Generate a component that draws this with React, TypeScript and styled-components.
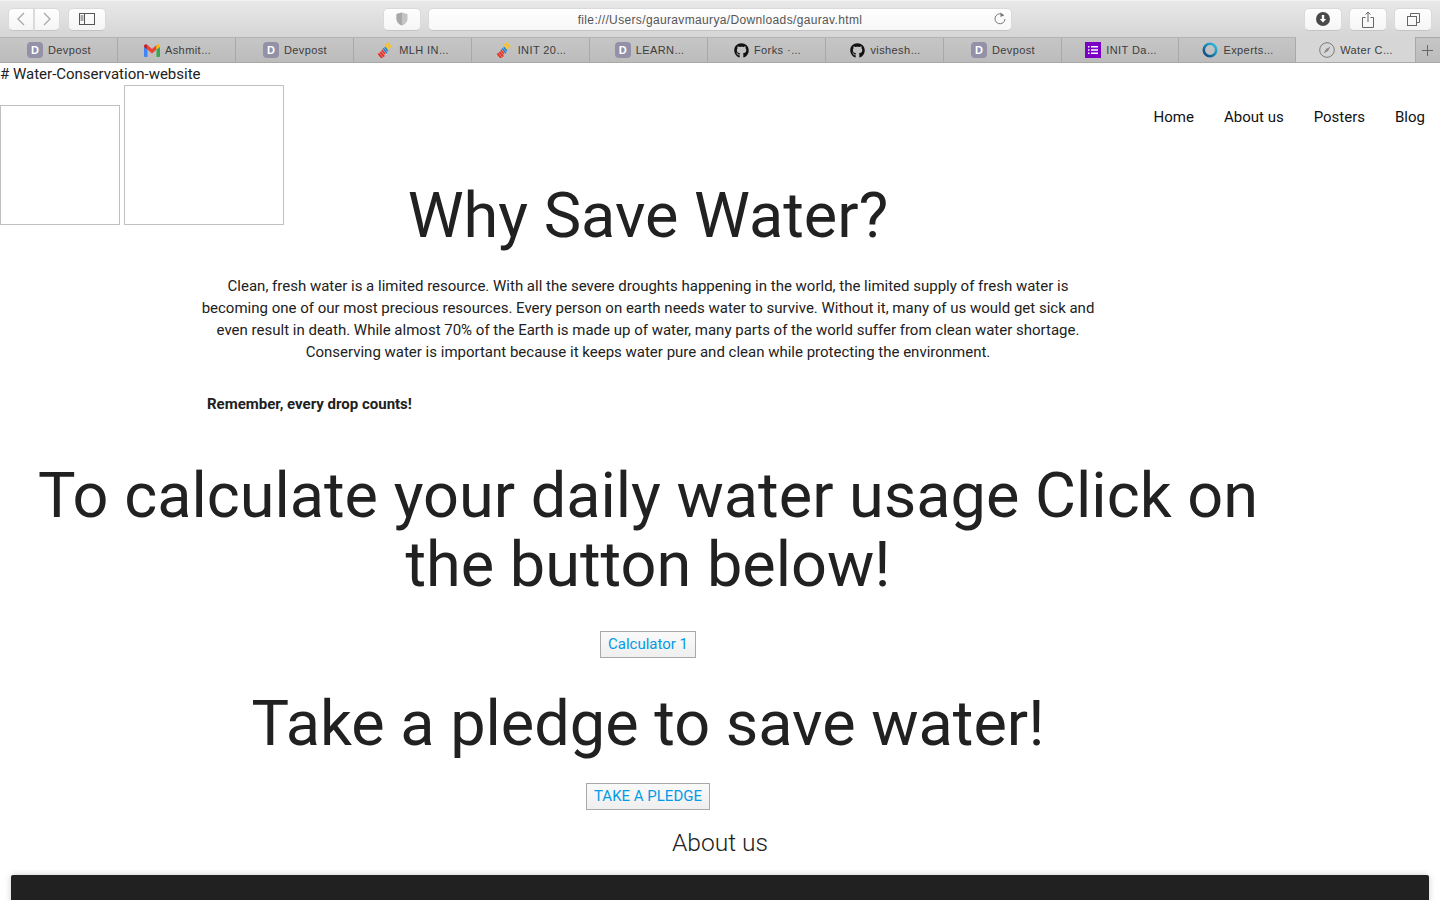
// Screenshot of a Safari window showing the water conservation page
import styled, { createGlobalStyle } from "styled-components";
import { FaGithub } from "react-icons/fa";

const GlobalStyle = createGlobalStyle`
  html, body {
    margin: 0;
    padding: 0;
    height: 900px;
    overflow: hidden;
    background: #fff;
  }
  * {
    box-sizing: border-box;
  }
`;

const Window = styled.div`
  width: 1440px;
  height: 900px;
  overflow: hidden;
  display: flex;
  flex-direction: column;
`;

// Browser toolbar
const Toolbar = styled.div`
  height: 38px;
  flex: none;
  display: flex;
  align-items: center;
  padding: 0 8px 0 8px;
  background: linear-gradient(#e9e9e9, #d5d5d5);
  border-top: 1px solid #f2f2f2;
  border-bottom: 1px solid #b3b3b3;
`;

const ToolButton = styled.div<{ $w: number; $left?: number; $radius?: string }>`
  width: ${(p) => p.$w}px;
  height: 23px;
  margin-left: ${(p) => p.$left ?? 0}px;
  flex: none;
  display: flex;
  align-items: center;
  justify-content: center;
  background: linear-gradient(#fefefe, #f5f5f5);
  border: 1px solid #dadada;
  border-bottom-color: #c4c4c4;
  border-radius: ${(p) => p.$radius ?? "5px"};
`;

const UrlBar = styled.div`
  position: relative;
  width: 584px;
  height: 23px;
  margin-left: 7px;
  padding-top: 1px;
  flex: none;
  display: flex;
  align-items: center;
  justify-content: center;
  background: linear-gradient(#fefefe, #f7f7f7);
  border: 1px solid #dadada;
  border-bottom-color: #c4c4c4;
  border-radius: 5px;
  font-family: "Liberation Sans", Arial, sans-serif;
  font-size: 12px;
  letter-spacing: 0.35px;
  color: #555;
`;

const Reload = styled.svg`
  position: absolute;
  right: 4px;
  top: 3px;
`;

// Tab strip
const TabStrip = styled.div`
  height: 25px;
  flex: none;
  display: flex;
  background: linear-gradient(#c6c6c6, #bcbcbc);
  border-bottom: 1px solid #a9a9a9;
`;

const Tab = styled.div<{ $w: number; $active?: boolean }>`
  width: ${(p) => p.$w}px;
  flex: none;
  display: flex;
  align-items: center;
  justify-content: center;
  gap: 5px;
  padding-left: 1px;
  border-right: 1px solid ${(p) => (p.$active ? "transparent" : "#a9a9a9")};
  margin-top: ${(p) => (p.$active ? "-1px" : "0")};
  background: ${(p) => (p.$active ? "#d6d6d6" : "transparent")};
  font-family: "Liberation Sans", Arial, sans-serif;
  font-size: 11px;
  letter-spacing: 0.4px;
  color: #3c3c3c;
`;

// Safari's truncation dots sit tighter than the font's own ellipsis
const Dots = styled.span`
  font-size: 10px;
  letter-spacing: -1px;
`;

const PlusTab = styled.div`
  flex: 1;
  display: flex;
  align-items: center;
  justify-content: center;
  padding-right: 1px;
  border-left: 1px solid #a9a9a9;
  margin-top: -1px;
  border-top: 1px solid #a9a9a9;
`;

const DevpostIcon = styled.span`
  width: 16px;
  height: 16px;
  border-radius: 4px;
  background: #9291a8;
  color: #fff;
  display: flex;
  align-items: center;
  justify-content: center;
  font-size: 11px;
  font-weight: 700;
  letter-spacing: 0;
`;

// Page content
const Page = styled.div`
  flex: 1;
  font-family: Roboto, Arial, sans-serif;
  color: #212121;
`;

const ReadmeLine = styled.div`
  height: 22px;
  line-height: 22px;
  font-size: 15px;
  color: #212121;
`;

const Header = styled.div`
  display: flex;
  justify-content: space-between;
  align-items: flex-start;
  height: 140px;
`;

const Logos = styled.div`
  display: flex;
  align-items: flex-end;
  gap: 4px;
  height: 140px;
`;

const Logo = styled.div<{ $w: number; $h: number }>`
  width: ${(p) => p.$w}px;
  height: ${(p) => p.$h}px;
  border: 1px solid #c0c0c0;
`;

const Nav = styled.nav`
  display: flex;
  gap: 30px;
  padding: 23px 15px 0 0;
  font-size: 15px;
  line-height: 18px;
  color: #111;
`;

const Main = styled.div`
  width: 1296px;
  text-align: center;
`;

const Heading = styled.h1<{ $top: number }>`
  margin: ${(p) => p.$top}px 0 0;
  font-size: 63px;
  font-weight: 400;
  line-height: 69px;
  color: #212121;
`;

const Intro = styled.p`
  width: 900px;
  margin: 25px auto 0;
  font-size: 15px;
  line-height: 22px;
`;

const Remember = styled.p`
  width: 882px;
  margin: 30px auto 0;
  text-align: left;
  font-size: 15px;
  line-height: 22px;
  font-weight: 700;
`;

const CtaButton = styled.a<{ $top: number }>`
  display: inline-block;
  margin-top: ${(p) => p.$top}px;
  padding: 0 7px;
  height: 27px;
  line-height: 25px;
  font-size: 15px;
  color: #039be5;
  background: linear-gradient(#fafafa, #efefef);
  border: 1px solid #a9a9a9;
`;

const AboutTitle = styled.h2`
  margin: 16px 0 0;
  text-align: center;
  font-size: 24.6px;
  font-weight: 300;
  line-height: 34px;
  color: #212121;
`;

const Footer = styled.div`
  height: 60px;
  margin: 15px 11px 0;
  background: #212121;
  border-radius: 2px 2px 0 0;
  box-shadow: 0 0 6px rgba(0, 0, 0, 0.2);
`;

const GmailIcon = () => (
  <svg width="16" height="13" viewBox="0 0 16 13">
    <path d="M0 2v10a1 1 0 0 0 1 1h2.500V5z" fill="#4285f4" />
    <path d="M16 2v10a1 1 0 0 1-1 1h-2.500V5z" fill="#34a853" />
    <path d="M3.500 1 8 5l4.500-4v4.500L8 9.500 3.500 5.500z" fill="#ea4335" />
    <path d="M0 2.500C0 .5 2 -.3 3.500 1v4.500L0 3z" fill="#c5221f" />
    <path d="M16 2.500C16 .5 14 -.3 12.500 1v4.500L16 3z" fill="#fbbc04" />
  </svg>
);

// Blocky diagonal MLH badge: red, blue and yellow chunks on a rising line
const MlhIcon = () => (
  <svg width="16" height="16" viewBox="0 0 16 16">
    <g transform="rotate(-38 8 8)">
      <rect x="-1" y="6" width="2" height="6" fill="#e73427" />
      <rect x="1.500" y="6" width="2" height="6" fill="#e73427" />
      <rect x="4" y="5.500" width="1.500" height="5" fill="#e73427" />
      <rect x="6" y="5" width="1.500" height="6" fill="#1c7dc8" />
      <rect x="8" y="5" width="1.500" height="5" fill="#1c7dc8" />
      <rect x="10" y="3" width="2" height="6" fill="#f8c32a" />
      <rect x="12.500" y="3" width="2" height="6" fill="#f8c32a" />
    </g>
  </svg>
);

const FormIcon = () => (
  <svg width="16" height="16" viewBox="0 0 16 16">
    <rect width="16" height="16" fill="#7a00c4" />
    <path d="M3 4h1.500v1.500H3zM6 4h7v1.500H6zM3 7.200h1.500v1.500H3zM6 7.200h7v1.500H6zM3 10.400h1.500v1.500H3zM6 10.400h7v1.500H6z" fill="#fff" />
  </svg>
);

const RingIcon = () => (
  <svg width="16" height="16" viewBox="0 0 16 16">
    <defs>
      <linearGradient id="ring" x1="0" y1="1" x2="1" y2="0">
        <stop offset="0" stopColor="#0b3f7a" />
        <stop offset="1" stopColor="#2cc4e8" />
      </linearGradient>
    </defs>
    <circle cx="8" cy="8" r="6.200" fill="none" stroke="url(#ring)" strokeWidth="2.600" />
  </svg>
);

const CompassIcon = () => (
  <svg width="16" height="16" viewBox="0 0 16 16">
    <circle cx="8" cy="8" r="7.300" fill="none" stroke="#7a7a7a" strokeWidth="1" />
    <path d="M11.500 4.500 9 9 4.500 11.500 7 7z" fill="#8a8a8a" />
  </svg>
);

const tabs = [
  { label: "Devpost", cut: false, icon: <DevpostIcon>D</DevpostIcon> },
  { label: "Ashmit", cut: true, icon: <GmailIcon /> },
  { label: "Devpost", cut: false, icon: <DevpostIcon>D</DevpostIcon> },
  { label: "MLH IN", cut: true, icon: <MlhIcon /> },
  { label: "INIT 20", cut: true, icon: <MlhIcon /> },
  { label: "LEARN", cut: true, icon: <DevpostIcon>D</DevpostIcon> },
  { label: "Forks ·", cut: true, icon: <FaGithub size={15} color="#111" /> },
  { label: "vishesh", cut: true, icon: <FaGithub size={15} color="#111" /> },
  { label: "Devpost", cut: false, icon: <DevpostIcon>D</DevpostIcon> },
  { label: "INIT Da", cut: true, icon: <FormIcon /> },
  { label: "Experts", cut: true, icon: <RingIcon /> },
];

const App = () => {
  return (
    <Window>
      <GlobalStyle />
      <Toolbar>
        <ToolButton $w={26} $radius="5px 0 0 5px">
          <svg width="10" height="14" viewBox="0 0 10 14">
            <path d="M8 1 2 7l6 6" fill="none" stroke="#a8a8a8" strokeWidth="1.300" />
          </svg>
        </ToolButton>
        <ToolButton $w={26} $radius="0 5px 5px 0">
          <svg width="10" height="14" viewBox="0 0 10 14">
            <path d="m2 1 6 6-6 6" fill="none" stroke="#a8a8a8" strokeWidth="1.300" />
          </svg>
        </ToolButton>
        <ToolButton $w={38} $left={8}>
          <svg width="16" height="12" viewBox="0 0 16 12">
            <rect x="0.500" y="0.500" width="15" height="11" fill="none" stroke="#555" />
            <path d="M5.500 0.500v11M1.500 3h3M1.500 5h3M1.500 7h3" fill="none" stroke="#555" />
          </svg>
        </ToolButton>
        <ToolButton $w={38} $left={277}>
          <svg width="12" height="14" viewBox="0 0 12 14">
            <path d="M6 .5 11.500 2v4.500C11.500 10 9 12.500 6 13.500 3 12.500.5 10 .5 6.500V2z" fill="#c4c4c4" />
            <path d="M6 .5 .5 2v4.500C.5 10 3 12.500 6 13.500z" fill="#a9a9a9" />
          </svg>
        </ToolButton>
        <UrlBar>
          file:///Users/gauravmaurya/Downloads/gaurav.html
          <Reload width="14" height="14" viewBox="0 0 14 14">
            <path d="M10.800 3.500A5 5 0 1 0 12 7" fill="none" stroke="#777" strokeWidth="1" />
            <path d="M7.500 0.500 11 3.500 7.500 5z" fill="#777" />
          </Reload>
        </UrlBar>
        <ToolButton $w={38} $left={292}>
          <svg width="14" height="14" viewBox="0 0 14 14">
            <circle cx="7" cy="7" r="7" fill="#4a4a4a" />
            <path d="M5.800 3h2.400v4h2L7 10.500 3.800 7h2z" fill="#fff" />
          </svg>
        </ToolButton>
        <ToolButton $w={38} $left={7}>
          <svg width="12" height="17" viewBox="0 0 12 17">
            <path d="M3.500 6.500H.5v10h11v-10h-3M6 11V1M3.500 3.500 6 1l2.500 2.500" fill="none" stroke="#666" />
          </svg>
        </ToolButton>
        <ToolButton $w={38} $left={7}>
          <svg width="13" height="13" viewBox="0 0 13 13">
            <rect x="0.500" y="3.500" width="9" height="9" fill="none" stroke="#666" />
            <path d="M3.500 3.500v-3h9v9h-3" fill="none" stroke="#666" />
          </svg>
        </ToolButton>
      </Toolbar>
      <TabStrip>
        {tabs.map((t, i) => (
          <Tab key={i} $w={i === 10 ? 117 : i === 9 ? 117 : 118}>
            {t.icon}
            <span>
              {t.label}
              {t.cut && <Dots>…</Dots>}
            </span>
          </Tab>
        ))}
        <Tab $w={119} $active>
          <CompassIcon />
          <span>
            Water C<Dots>…</Dots>
          </span>
        </Tab>
        <PlusTab>
          <svg width="11" height="11" viewBox="0 0 11 11">
            <path d="M5.500 0v11M0 5.500h11" stroke="#666" strokeWidth="1" />
          </svg>
        </PlusTab>
      </TabStrip>
      <Page>
        <ReadmeLine># Water-Conservation-website</ReadmeLine>
        <Header>
          <Logos>
            <Logo $w={120} $h={120} />
            <Logo $w={160} $h={140} />
          </Logos>
          <Nav>
            <span>Home</span>
            <span>About us</span>
            <span>Posters</span>
            <span>Blog</span>
          </Nav>
        </Header>
        <Main>
          <Heading $top={-44}>Why Save Water?</Heading>
          <Intro>
            Clean, fresh water is a limited resource. With all the severe droughts happening in the world, the limited
            supply of fresh water is becoming one of our most precious resources. Every person on earth needs water to
            survive. Without it, many of us would get sick and even result in death. While almost 70% of the Earth is
            made up of water, many parts of the world suffer from clean water shortage. Conserving water is important
            because it keeps water pure and clean while protecting the environment.
          </Intro>
          <Remember>Remember, every drop counts!</Remember>
          <Heading $top={46}>To calculate your daily water usage Click on the button below!</Heading>
          <CtaButton $top={32}>Calculator 1</CtaButton>
          <Heading $top={31}>Take a pledge to save water!</Heading>
          <CtaButton $top={25}>TAKE A PLEDGE</CtaButton>
        </Main>
        <AboutTitle>About us</AboutTitle>
        <Footer />
      </Page>
    </Window>
  );
};

export default App;
